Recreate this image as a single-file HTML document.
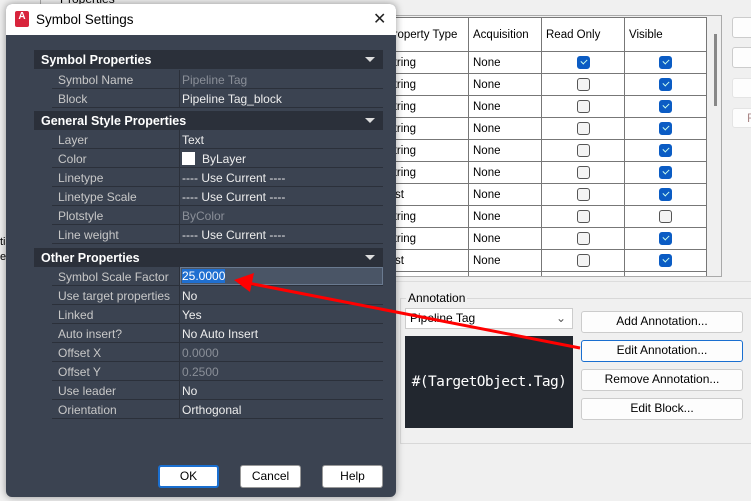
<!DOCTYPE html>
<html><head><meta charset="utf-8">
<style>
*{box-sizing:border-box;margin:0;padding:0}
body{width:751px;height:501px;background:#f0f0f0;position:relative;overflow:hidden;font-family:"Liberation Sans",sans-serif;font-size:12px;color:#000}
.a{position:absolute}
table.t{position:absolute;left:380px;top:17px;border-collapse:collapse;background:#fff}
table.t td{border:1px solid #777;height:22px;padding-left:4px;font-size:11.5px}
table.t tr:first-child td{height:34px}
.cb{display:inline-block;width:13px;height:13px;border-radius:3px;border:1px solid #555;background:#f4f4f4;vertical-align:middle}
.cb.on{background:#0b5cc4;border-color:#0b5cc4;position:relative}
.cb.on:after{content:"";position:absolute;left:3px;top:2px;width:5px;height:3px;border-left:1px solid #cfe;border-bottom:1px solid #cfe;transform:rotate(-45deg)}
.c{text-align:center;padding-left:0!important}
.btn{position:absolute;background:#fdfdfd;border:1px solid #ccc;border-radius:3px;text-align:center;font-size:12px;line-height:19px}
.dlg{position:absolute;left:6px;top:4px;width:390px;height:493px;background:#3b4351;border-radius:6px;overflow:hidden;box-shadow:0 0 8px rgba(0,0,0,.4)}
.tb{height:31px;background:#fff;position:relative}
.hd{position:absolute;left:28px;width:349px;height:19px;background:#2b303a;color:#fff;font-weight:bold;font-size:12.5px;padding-left:7px;line-height:20px}
.hd:after{content:"";position:absolute;right:8px;top:7px;border-left:5px solid transparent;border-right:5px solid transparent;border-top:5px solid #ddd}
.r{position:absolute;left:46px;width:331px;height:19px;border-bottom:1px solid #2b303a;color:#ddd;font-size:12px;line-height:20px}
.r span{position:absolute;left:0;width:128px;height:19px;padding-left:6px;border-right:1px solid #2b303a;color:#c8c8c8}
.r b{position:absolute;left:130px;font-weight:normal;color:#eee}
.r b.g{color:#8a8f98}
.db{position:absolute;top:461px;width:61px;height:23px;background:#fff;border:1px solid #999;border-radius:3px;text-align:center;line-height:21px;font-size:12px}
</style></head><body>
<div class="a" style="left:40px;top:0;width:1px;height:40px;background:#aaa"></div>
<div class="a" style="left:60px;top:-8px;font-size:12px">Properties</div>
<div class="a" style="left:0;top:236px;font-size:11px">tis</div>
<div class="a" style="left:0;top:251px;font-size:11px">ev</div>
<div class="a" style="left:393px;top:15px;width:329px;height:262px;border:1px solid #aaa;background:#f0f0f0;overflow:hidden">
<table class="t" style="left:-13px;top:1px">
<tr><td style="width:87px">Property Type</td><td style="width:73px">Acquisition</td><td style="width:83px">Read Only</td><td style="width:82px">Visible</td></tr>
<tr><td>String</td><td>None</td><td class="c"><i class="cb on"></i></td><td class="c"><i class="cb on"></i></td></tr>
<tr><td>String</td><td>None</td><td class="c"><i class="cb"></i></td><td class="c"><i class="cb on"></i></td></tr>
<tr><td>String</td><td>None</td><td class="c"><i class="cb"></i></td><td class="c"><i class="cb on"></i></td></tr>
<tr><td>String</td><td>None</td><td class="c"><i class="cb"></i></td><td class="c"><i class="cb on"></i></td></tr>
<tr><td>String</td><td>None</td><td class="c"><i class="cb"></i></td><td class="c"><i class="cb on"></i></td></tr>
<tr><td>String</td><td>None</td><td class="c"><i class="cb"></i></td><td class="c"><i class="cb on"></i></td></tr>
<tr><td>List</td><td>None</td><td class="c"><i class="cb"></i></td><td class="c"><i class="cb on"></i></td></tr>
<tr><td>String</td><td>None</td><td class="c"><i class="cb"></i></td><td class="c"><i class="cb"></i></td></tr>
<tr><td>String</td><td>None</td><td class="c"><i class="cb"></i></td><td class="c"><i class="cb on"></i></td></tr>
<tr><td>List</td><td>None</td><td class="c"><i class="cb"></i></td><td class="c"><i class="cb on"></i></td></tr>
<tr><td>String</td><td>None</td><td class="c"><i class="cb"></i></td><td class="c"><i class="cb on"></i></td></tr>
</table>
<div class="a" style="left:320px;top:18px;width:3px;height:72px;background:#888"></div>
</div>
<div class="btn" style="left:732px;top:17px;width:30px;height:21px"></div>
<div class="btn" style="left:732px;top:47px;width:30px;height:21px"></div>
<div class="btn" style="left:732px;top:78px;width:30px;height:20px;border-color:#e4e4e4"></div>
<div class="btn" style="left:732px;top:108px;width:30px;height:20px;border-color:#e4e4e4;color:#a88;text-align:left;padding-left:14px">F</div>
<div class="a" style="left:396px;top:281px;width:355px;height:1px;background:#ddd"></div>
<div class="a" style="left:400px;top:298px;width:360px;height:146px;border:1px solid #d8d8d8;border-right:none"></div>
<div class="a" style="left:406px;top:291px;background:#f0f0f0;padding:0 2px;font-size:12px">Annotation</div>
<div class="a" style="left:405px;top:308px;width:168px;height:21px;background:#fff;border:1px solid #ccc;font-size:12px;line-height:19px;padding-left:4px">Pipeline Tag<span style="position:absolute;right:6px;top:0;color:#555">&#8964;</span></div>
<div class="a" style="left:405px;top:336px;width:168px;height:92px;background:#22272f;color:#fff;font-family:'DejaVu Sans Mono',monospace;font-size:14.5px;line-height:92px;text-align:center;letter-spacing:-.6px">#(TargetΟbject.Tag)</div>
<div class="btn" style="left:581px;top:311px;width:162px;height:22px">Add Annotation...</div>
<div class="btn" style="left:581px;top:340px;width:162px;height:22px;border-color:#1a6fd0">Edit Annotation...</div>
<div class="btn" style="left:581px;top:369px;width:162px;height:22px">Remove Annotation...</div>
<div class="btn" style="left:581px;top:398px;width:162px;height:22px">Edit Block...</div>

<div class="dlg">
<div class="tb">
<div class="a" style="left:9px;top:7px;width:14px;height:16px;background:#d8243c;border-radius:2px;color:#fff;font-size:10px;font-weight:bold;text-align:center;line-height:12px">A</div>
<div class="a" style="left:30px;top:8px;font-size:13.5px">Symbol Settings</div>
<div class="a" style="left:367px;top:5px;font-size:16px;color:#222">&#x2715;</div>
</div>
<div class="hd" style="top:46px">Symbol Properties</div>
<div class="r" style="top:66px"><span>Symbol Name</span><b class="g">Pipeline Tag</b></div>
<div class="r" style="top:85px"><span>Block</span><b>Pipeline Tag_block</b></div>
<div class="hd" style="top:107px">General Style Properties</div>
<div class="r" style="top:126px"><span>Layer</span><b>Text</b></div>
<div class="r" style="top:145px"><span>Color</span><b><i style="display:inline-block;width:13px;height:13px;background:#fff;vertical-align:-2px;margin-right:7px"></i>ByLayer</b></div>
<div class="r" style="top:164px"><span>Linetype</span><b>---- Use Current ----</b></div>
<div class="r" style="top:183px"><span>Linetype Scale</span><b>---- Use Current ----</b></div>
<div class="r" style="top:202px"><span>Plotstyle</span><b class="g">ByColor</b></div>
<div class="r" style="top:221px"><span>Line weight</span><b>---- Use Current ----</b></div>
<div class="hd" style="top:244px">Other Properties</div>
<div class="r" style="top:263px"><span>Symbol Scale Factor</span><b style="left:128px;width:203px;height:18px;background:#4a5566;border:1px solid #6a7a90;padding-left:1px;line-height:16px"><i style="font-style:normal;background:#1f6fd0;color:#fff">25.0000</i></b></div>
<div class="r" style="top:282px"><span>Use target properties</span><b>No</b></div>
<div class="r" style="top:301px"><span>Linked</span><b>Yes</b></div>
<div class="r" style="top:320px"><span>Auto insert?</span><b>No Auto Insert</b></div>
<div class="r" style="top:339px"><span>Offset X</span><b class="g">0.0000</b></div>
<div class="r" style="top:358px"><span>Offset Y</span><b class="g">0.2500</b></div>
<div class="r" style="top:377px"><span>Use leader</span><b>No</b></div>
<div class="r" style="top:396px"><span>Orientation</span><b>Orthogonal</b></div>
<div class="db" style="left:152px;border:2px solid #1a6fd0;line-height:19px">OK</div>
<div class="db" style="left:234px">Cancel</div>
<div class="db" style="left:316px">Help</div>
</div>
<svg class="a" style="left:0;top:0" width="751" height="501">
<line x1="580" y1="348" x2="248" y2="283" stroke="#f00" stroke-width="3"/>
<polygon points="234,280 254,273 250,292" fill="#f00"/>
</svg>
</body></html>
